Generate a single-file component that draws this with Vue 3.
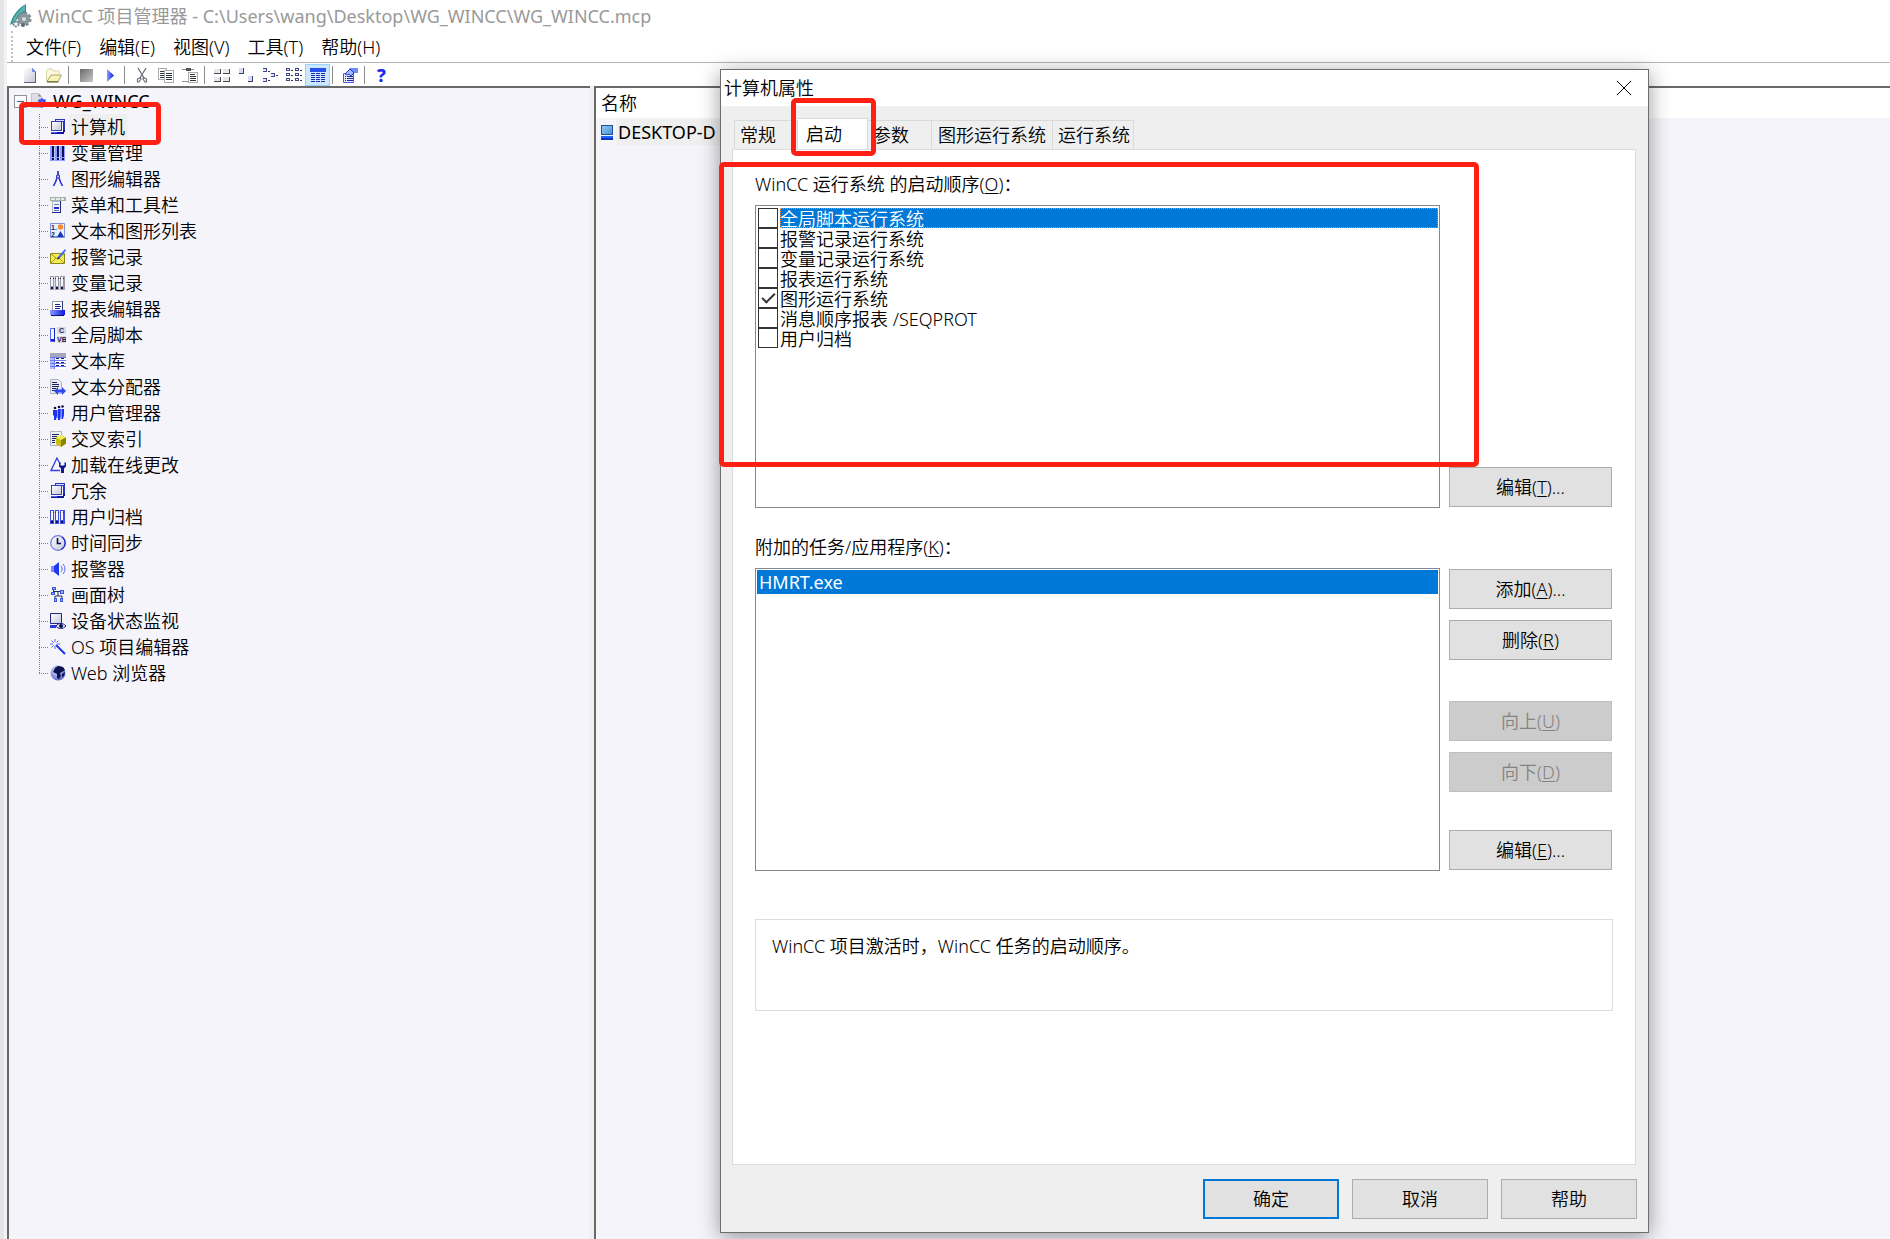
<template>
  <div class="desktop">
    <svg class="symbols" width="0" height="0" aria-hidden="true">
      <defs>
        <linearGradient id="blueFade" x1="0" x2="1" y1="0" y2="0">
          <stop offset="0" stop-color="#8aa0ff" />
          <stop offset="1" stop-color="#0a14e0" />
        </linearGradient>
        <linearGradient id="greyFade" x1="0" x2="1" y1="0" y2="1">
          <stop offset="0" stop-color="#6a6a6a" />
          <stop offset="1" stop-color="#c8c8c8" />
        </linearGradient>
        <linearGradient id="paperFade" x1="0" x2="1" y1="0" y2="1">
          <stop offset="0" stop-color="#ffffff" />
          <stop offset="1" stop-color="#c4c8d8" />
        </linearGradient>
        <linearGradient id="screenFade" x1="0" x2="1" y1="0" y2="1">
          <stop offset="0" stop-color="#8cc8f0" />
          <stop offset="1" stop-color="#4c94d4" />
        </linearGradient>
        <radialGradient id="globeFade" cx="0.4" cy="0.35" r="0.7">
          <stop offset="0" stop-color="#dfe2ff" />
          <stop offset="1" stop-color="#5660c8" />
        </radialGradient>
      </defs>

      <symbol id="wincc" viewBox="0 0 22 24">
        <path d="M16 0C8 4 2 12 0 21l6-3c1-5 4-8 10-9z" fill="#2f8f92" />
        <path d="M15 1C8 7 4 13 2 19l4-3c1-5 4-8 9-9z" fill="#5cb4b4" />
        <circle cx="14" cy="15" r="6" fill="#8c989e" />
        <circle cx="14" cy="15" r="6.500" fill="none" stroke="#7c888e" stroke-width="2" stroke-dasharray="3 2" />
        <circle cx="14" cy="15" r="2" fill="#d8dee0" />
        <circle cx="13" cy="21" r="2" fill="#5c6a72" />
        <circle cx="6" cy="20" r="2.500" fill="none" stroke="#7c888e" stroke-width="2" stroke-dasharray="2 1" />
      </symbol>

      <symbol id="computer" viewBox="0 0 16 16" shape-rendering="crispEdges">
        <path d="M5 0h10v11h-2V3H5z" fill="#2c34b8" />
        <path d="M6 1h8v1H6z" fill="#d8dcff" />
        <path d="M1 2h11v10H1z" fill="#3840b0" />
        <path d="M2 3h9v8H2z" fill="url(#paperFade)" />
        <path d="M13 11h2v2h-2z" fill="#10167c" />
        <path d="M1 13h13v2H1z" fill="#10169c" />
        <path d="M1 13h6v1H1z" fill="#5664ff" />
      </symbol>

      <symbol id="tags" viewBox="0 0 16 16" shape-rendering="crispEdges">
        <path d="M0 1h15v15H0z" fill="#8c9cff" />
        <path d="M2 1h2v11H2zM7 1h2v11H7zM12 1h2v11h-2z" fill="#08105c" />
        <path d="M2 13h2v2H2zM7 13h2v2H7zM12 13h2v2h-2z" fill="#08105c" />
        <path d="M4 1h1v15H4zM9 1h1v15H9z" fill="#c4ccff" />
      </symbol>

      <symbol id="compass" viewBox="0 0 16 16">
        <path d="M8 0v4" stroke="#101880" stroke-width="1.500" />
        <circle cx="8" cy="5.500" r="1.500" fill="none" stroke="#1c28c8" stroke-width="1.200" />
        <path d="M7 7L5.500 11 3.500 15M9 7l1.500 4 2 4" fill="none" stroke="#2430d8" stroke-width="1.600" />
      </symbol>

      <symbol id="menus" viewBox="0 0 16 16" shape-rendering="crispEdges">
        <path d="M0 0h16v4H0z" fill="#a4b0ac" />
        <path d="M1 1h4v2H1zM6 1h4v2H6zM11 1h3v2h-3z" fill="#e4ecec" />
        <path d="M2 4h9v12H2z" fill="#b0b4c8" />
        <path d="M10 4h1v12H2v-1h8z" fill="#20287c" />
        <path d="M3 5h7v10H3z" fill="#f4f6ff" />
        <path d="M4 7h5v1H4zM4 13h5v1H4z" fill="#6878a0" />
        <path d="M4 10h5v2H4z" fill="#1c28d0" />
      </symbol>

      <symbol id="alarm" viewBox="0 0 16 16">
        <path d="M.5 4.500h14v10H.500z" fill="#f4ec50" stroke="#8c8818" />
        <path d="M1 5l6.500 5L14 5M1 14l5-5M14 14l-5-5" fill="none" stroke="#a09c20" />
        <path d="M15 0l1 1.500-7 8.500H7.500l.3-2z" fill="#4868f8" />
        <path d="M7.800 8L7.300 10.500 9.500 9.600z" fill="#101860" />
      </symbol>

      <symbol id="archive" viewBox="0 0 16 16" shape-rendering="crispEdges">
        <path d="M0 1h4v14H0zM5 1h4v14H5zM10 1h5v14h-5z" fill="currentColor" />
        <path d="M1 2h2v9H1zM6 2h2v9H6zM11 2h2v9h-2z" fill="#f4f4ff" />
        <path d="M0 3h1v1H0zM3 3h1v1H3zM5 3h1v1H5zM8 3h1v1H8zM10 3h1v1h-1zM13 3h1v1h-1z" fill="#303040" />
        <path d="M1 12h2v2H1zM6 12h2v2H6zM11 12h2v2h-2z" fill="#101050" />
        <path d="M4 1h1v14H4zM9 1h1v14H9z" fill="#e0e0f0" />
      </symbol>

      <symbol id="report" viewBox="0 0 16 16" shape-rendering="crispEdges">
        <path d="M2 0h11v11H2z" fill="#9098b0" />
        <path d="M12 0h1v11h-1z" fill="#30387c" />
        <path d="M3 1h9v9H3z" fill="#fff" />
        <path d="M5 3h5v1H5zM5 5h6v1H5zM5 7h5v1H5z" fill="#182080" />
        <path d="M0 9h15v5H0z" fill="url(#blueFade)" />
        <path d="M1 14h13v1H1z" fill="#08107c" />
      </symbol>

      <symbol id="textlib" viewBox="0 0 16 16" shape-rendering="crispEdges">
        <path d="M0 0h16v16H0z" fill="#6878f0" />
        <path d="M0 0h16v4H0z" fill="#a4a8b8" />
        <path d="M5 5h11v2H5zM5 8h11v2H5zM5 11h11v2H5zM5 14h11v2H5z" fill="#fff" />
        <path d="M0 5h4v2H0zM0 8h4v2H0zM0 11h4v2H0zM0 14h4v2H0z" fill="#b4bcff" />
        <path d="M6 5h3v1H6zM11 5h3v1h-3zM6 9h3v1H6zM11 9h3v1h-3zM6 12h3v1H6zM11 12h3v1h-3z" fill="#182060" />
      </symbol>

      <symbol id="distribute" viewBox="0 0 16 16">
        <path d="M.5.5h8l3 3v11H.500z" fill="#e8eaf0" stroke="#b0b4c0" />
        <path d="M2 3.500h5M2 5.500h7M2 7.500h7M2 9.500h4M2 11.500h3" stroke="#182060" />
        <path d="M4 12l4-4v2.500h4V8l4 4-4 4v-2.500H8V16z" fill="#3048f0" />
      </symbol>

      <symbol id="users" viewBox="0 0 16 16">
        <circle cx="5" cy="3" r="1.300" fill="#101040" />
        <circle cx="9" cy="2" r="1.300" fill="#101040" />
        <circle cx="12.500" cy="1.500" r="1.300" fill="#101040" />
        <path d="M3 5h4v6l-1 4H4V11l-1-1zM8 4h3v7l-1 4H8zM11.500 4H14v6l-1 4h-1.500z" fill="#1c34f0" />
        <path d="M7.500 5v8M11 5v8" stroke="#7c90ff" />
      </symbol>

      <symbol id="xref" viewBox="0 0 16 16">
        <path d="M.5.5h11v14H.500z" fill="#f0f0f4" stroke="#b0b4c0" />
        <path d="M2 3.500h7M2 5.500h5M2 7.500h4M2 9.500h3M2 11.500h3" stroke="#182060" />
        <path d="M11 4l5 2.500v6L11 16l-5-3V6.500z" fill="#c8c010" />
        <path d="M11 4l5 2.500L11 9 6 6.500z" fill="#f0ec60" />
        <path d="M11 9l5-2.500v6L11 16z" fill="#8c8400" />
      </symbol>

      <symbol id="online" viewBox="0 0 16 16">
        <path d="M10 7L7 1 1 13.500h9" fill="none" stroke="#3040d8" stroke-width="1.300" />
        <path d="M9 6v3.500l2 2V16h3v-4.500l2-2V6l-1.500-1v3.500h-4V5z" fill="#101890" />
      </symbol>

      <symbol id="clock" viewBox="0 0 16 16">
        <circle cx="8" cy="8" r="7.300" fill="url(#paperFade)" stroke="#6878e0" stroke-width="1.200" />
        <path d="M12 2a7.300 7.300 0 0 1-1 12.500" fill="none" stroke="#1828c0" stroke-width="1.200" />
        <path d="M7.500 3v5.500H11" fill="none" stroke="#080c50" stroke-width="1.600" />
      </symbol>

      <symbol id="horn" viewBox="0 0 16 16">
        <path d="M1 5h3v6H1z" fill="#7c8cff" />
        <path d="M4 5l5-4v14l-5-4z" fill="#2038f0" />
        <path d="M11 5c1.500 2 1.500 4 0 6M13 3c2.500 3 2.500 7 0 10" fill="none" stroke="#5068f0" />
      </symbol>

      <symbol id="picturetree" viewBox="0 0 16 16">
        <path d="M3.500 2v4M4 4.500h8M8 5v4M5 11V9h7v2" fill="none" stroke="#203060" />
        <path d="M2 0h4v3H2zM1 5h4v3H1zM10 3h4v4h-4zM4 11h3v4H4zM10 11h3v4h-3z" fill="#3c54d8" />
        <path d="M3 1h2v1H3zM11 4h2v2h-2zM5 12h1v2H5zM11 12h1v2h-1zM2 6h2v1H2z" fill="#a0b0ff" />
      </symbol>

      <symbol id="monitor" viewBox="0 0 16 16">
        <path d="M.5.5h11v10H.500z" fill="url(#paperFade)" stroke="#202880" />
        <path d="M0 12h6v3H0z" fill="#2438e0" />
        <path d="M6 13c2-3.500 7-3.500 10 0-3 3.500-8 3.500-10 0z" fill="#d8dcff" stroke="#202880" />
        <circle cx="11" cy="13" r="2" fill="#080c50" />
      </symbol>

      <symbol id="wizard" viewBox="0 0 16 16">
        <path d="M6 6l9 9" stroke="#1c34e8" stroke-width="2" />
        <path d="M5 0v3M5 7v3M0 5h3M1.500 1.500l2 2M8.500 1.500l-2 2M1.500 8.500l2-2M7 5h3" stroke="#4c64f0" />
      </symbol>

      <symbol id="globe" viewBox="0 0 16 16">
        <circle cx="8" cy="8" r="7.500" fill="url(#globeFade)" />
        <path d="M5 3l3-2 5 1 2 3-3 2-2 1 1 3-2 3-2-1V9L3 7z" fill="#0c1250" />
        <path d="M12 9l3-2-1 4-2 1z" fill="#0c1250" />
      </symbol>

      <symbol id="project" viewBox="0 0 16 16">
        <path d="M.5.5h7l3 3v11H.500z" fill="#dcdee4" stroke="#c0c4cc" />
        <path d="M7.500.5v3h3" fill="#8088a0" />
        <circle cx="11" cy="10" r="3" fill="none" stroke="#3850e8" stroke-width="2" />
        <path d="M11 5v10M6 10h10M7.500 6.500l7 7M14.500 6.500l-7 7" stroke="#3850e8" stroke-width="1.300" />
        <circle cx="11" cy="10" r="1.500" fill="#dcdee4" />
      </symbol>

      <symbol id="pc" viewBox="0 0 12 15" shape-rendering="crispEdges">
        <path d="M0 0h12v10H0z" fill="#1c50a0" />
        <path d="M1 1h10v8H1z" fill="url(#screenFade)" />
        <path d="M0 11h12v4H0z" fill="#0c38b8" />
        <path d="M0 11h12v2H0z" fill="#2060ff" />
      </symbol>

      <symbol id="new" viewBox="0 0 16 16" shape-rendering="crispEdges">
        <path d="M2 1h8l4 4v11H2z" fill="#5c6070" />
        <path d="M2 1h8l3 4v10H2z" fill="url(#paperFade)" />
        <path d="M10 1v4h4z" fill="#7c90e0" />
      </symbol>

      <symbol id="open" viewBox="0 0 16 16">
        <path d="M.5 14V3.500L2 2h4l1 2h6v3" fill="#fdfae0" stroke="#d8d4a8" />
        <path d="M1 14.500L5 8h10.500l-3.500 6.500z" fill="#f6f2b8" stroke="#a8a460" />
        <path d="M1 15h11.500" stroke="#505020" />
      </symbol>

      <symbol id="stop" viewBox="0 0 16 16" shape-rendering="crispEdges">
        <path d="M2 2h13v13H2z" fill="url(#greyFade)" />
      </symbol>

      <symbol id="play" viewBox="0 0 16 16">
        <path d="M5 2l7 6.500L5 15z" fill="url(#blueFade)" />
      </symbol>

      <symbol id="cut" viewBox="0 0 16 16">
        <path d="M4 1l6 10M12 1L6 11" stroke="#6c7078" stroke-width="1.300" />
        <path d="M6.500 10.500L3.500 12v3h1.500l2-3zM9.500 10.500l3 1.500v3H11l-2-3z" fill="none" stroke="#6c7078" stroke-width="1.200" />
      </symbol>

      <symbol id="copy" viewBox="0 0 16 16" shape-rendering="crispEdges">
        <path d="M.5 1.500h8v11h-8z" fill="#fff" stroke="#a8acb0" />
        <path d="M2 4h5v1H2zM2 6h5v1H2zM2 8h5v1H2zM2 10h5v1H2z" fill="#303438" />
        <path d="M6.500 3.500h9v12h-9z" fill="#fff" stroke="#a8acb0" />
        <path d="M8 6h6v1H8zM8 8h6v1H8zM8 10h6v1H8zM8 12h6v1H8z" fill="#303438" />
      </symbol>

      <symbol id="paste" viewBox="0 0 16 16" shape-rendering="crispEdges">
        <path d="M0 2h12v1H0z" fill="#8c9098" />
        <path d="M4 1h5v3H4z" fill="#505458" />
        <path d="M0 14h6v1H0z" fill="#8c9098" />
        <path d="M6.500 5.500h9v10h-9z" fill="#fff" stroke="#a8acb0" />
        <path d="M8 7h5v1H8zM8 9h6v1H8zM8 11h6v1H8zM8 13h6v1H8z" fill="#303438" />
      </symbol>

      <symbol id="large" viewBox="0 0 16 16" shape-rendering="crispEdges">
        <path d="M0 2h7v5H0zM9 2h7v5H9zM0 10h7v5H0zM9 10h7v5H9z" fill="#484c50" />
        <path d="M0 2h6v4H0zM9 2h6v4H9zM0 10h6v4H0zM9 10h6v4H9z" fill="#e4e8ec" />
      </symbol>

      <symbol id="small" viewBox="0 0 16 16" shape-rendering="crispEdges">
        <path d="M1 1h5v6H1zM10 9h5v6h-5z" fill="#383c70" />
        <path d="M1 1h4v5H1zM10 9h4v5h-4z" fill="#d8dcf0" />
      </symbol>

      <symbol id="list" viewBox="0 0 16 16" shape-rendering="crispEdges">
        <path d="M1 1h4v4H1zM1 11h4v4H1zM9 6h4v4H9z" fill="#40448c" />
        <path d="M1 2h3v2H1zM1 12h3v2H1zM9 7h3v2H9z" fill="#e4e8ff" />
        <path d="M6 4h2v1H6zM6 13h2v1H6zM14 8h2v1h-2z" fill="#303438" />
      </symbol>

      <symbol id="columns" viewBox="0 0 16 16" shape-rendering="crispEdges">
        <path d="M0 1h4v3H0zM9 1h4v3H9zM0 6h4v3H0zM9 6h4v3H9zM0 11h4v3H0zM9 11h4v3H9z" fill="#40448c" />
        <path d="M1 2h2v1H1zM10 2h2v1h-2zM1 7h2v1H1zM10 7h2v1h-2zM1 12h2v1H1zM10 12h2v1h-2z" fill="#fff" />
        <path d="M5 3h2v1H5zM14 3h2v1h-2zM5 8h2v1H5zM14 8h2v1h-2zM5 13h2v1H5zM14 13h2v1h-2z" fill="#303438" />
      </symbol>

      <symbol id="details" viewBox="0 0 16 16" shape-rendering="crispEdges">
        <path d="M0 1h16v4H0z" fill="#2850e8" />
        <path d="M1 6h4v1H1zM6 6h4v1H6zM11 6h4v1h-4zM1 8h4v1H1zM6 8h4v1H6zM11 8h4v1h-4zM1 10h4v1H1zM6 10h4v1H6zM11 10h4v1h-4zM1 12h4v1H1zM6 12h4v1H6zM11 12h4v1h-4zM1 14h4v1H1zM6 14h4v1H6zM11 14h4v1h-4z" fill="#1c2cb0" />
      </symbol>

      <symbol id="properties" viewBox="0 0 16 16">
        <path d="M7 1h9v5h-4z" fill="#6c8cf8" />
        <path d="M1.500 6.500h10v9h-10z" fill="#e8ecff" stroke="#4858d8" />
        <path d="M3 9.500h1M5 9.500h6M3 11.500h1M5 11.500h6M3 13.500h1M5 13.500h6" stroke="#1828a0" />
        <path d="M3 7l5-5 4 4-3 3-2-2-2 1z" fill="#a8b8ff" stroke="#2838c8" />
      </symbol>
    </svg>

    <div class="app-window">
      <header class="titlebar">
        <svg class="app-icon"><use href="#wincc" /></svg>
        <h1>WinCC 项目管理器 - C:\Users\wang\Desktop\WG_WINCC\WG_WINCC.mcp</h1>
      </header>

      <nav class="menubar">
        <button v-for="item in menus" :key="item" type="button">{{ item }}</button>
      </nav>

      <div class="toolbar">
        <div v-for="(group, i) in tools" :key="i" class="tool-group">
          <button
            v-for="tool in group"
            :key="tool.icon"
            type="button"
            :class="{ active: tool.icon === 'details' }"
            :aria-label="tool.label"
          >
            <b v-if="tool.icon === 'help'">?</b>
            <svg v-else class="icon"><use :href="'#' + tool.icon" /></svg>
          </button>
        </div>
      </div>

      <main class="panes">
        <div class="tree-pane">
          <div class="tree-root">
            <button type="button" class="expander" aria-label="WG_WINCC"></button>
            <svg class="icon"><use href="#project" /></svg>
            <span>WG_WINCC</span>
          </div>
          <ul class="tree">
            <li v-for="node in nodes" :key="node.text" :class="{ current: node.text === '计算机' }">
              <svg v-if="node.icon === 'lists'" class="icon" viewBox="0 0 16 16">
                <path d="M.5.5h14v14H.500z" fill="#eef0ff" stroke="#8090d8" />
                <text x="1" y="7" class="glyph">1.</text>
                <text x="1" y="14" class="glyph">2.</text>
                <circle cx="10.500" cy="4" r="2.700" fill="#f09030" />
                <path d="M10.500 8L7 14h7z" fill="#1c38b0" />
              </svg>
              <svg v-else-if="node.icon === 'script'" class="icon" viewBox="0 0 16 16">
                <path d="M.5 1.500h4v13h-4z" fill="#f4f4ff" stroke="#5868f0" />
                <path d="M4.500 1v14" stroke="#1420c0" />
                <path d="M1 12h3v2H1z" fill="#1420c0" />
                <path d="M7 0h9v7H7zM7 9h9v7H7z" fill="#d8dae0" />
                <text x="9" y="6" class="glyph">C</text>
                <text x="7" y="15" class="glyph">VB</text>
              </svg>
              <svg v-else class="icon" :class="{ grey: node.text === '变量记录' }"><use :href="'#' + node.icon" /></svg>
              <span>{{ node.text }}</span>
            </li>
          </ul>
        </div>

        <div class="list-pane">
          <table>
            <thead>
              <tr><th>名称</th></tr>
            </thead>
            <tbody>
              <tr>
                <td>
                  <div class="machine">
                    <svg><use href="#pc" /></svg>
                    <span>DESKTOP-D</span>
                  </div>
                </td>
              </tr>
            </tbody>
          </table>
        </div>
      </main>
    </div>

    <section class="dialog" role="dialog" aria-labelledby="dialog-title">
      <header class="dialog-title">
        <h2 id="dialog-title">计算机属性</h2>
        <button type="button" aria-label="关闭">
          <svg viewBox="0 0 16 16"><path d="M1 1l14 14M15 1L1 15" /></svg>
        </button>
      </header>

      <div class="tabs" role="tablist">
        <button
          v-for="tab in tabs"
          :key="tab"
          type="button"
          role="tab"
          :class="{ selected: tab === activeTab, wide: tab === '参数' }"
          :aria-selected="tab === activeTab"
          @click="activeTab = tab"
        >{{ tab }}</button>
        <span class="callout tab-callout"></span>
      </div>

      <div class="sheet">
        <div class="field">
          <h3>WinCC 运行系统 的启动顺序(<u>O</u>)：</h3>
          <div class="field-row">
            <ul class="listbox">
              <li v-for="(item, i) in startup" :key="item.text" :class="{ selected: i === 0 }">
                <input :id="'startup-' + i" v-model="item.checked" type="checkbox" />
                <label :for="'startup-' + i">{{ item.text }}</label>
              </li>
            </ul>
            <div class="side bottom">
              <button type="button" class="btn">编辑(<u>T</u>)...</button>
            </div>
          </div>
        </div>

        <div class="field">
          <h3 id="tasks-label">附加的任务/应用程序(<u>K</u>)：</h3>
          <div class="field-row">
            <ul class="listbox tasks" role="listbox" aria-labelledby="tasks-label">
              <li class="selected" role="option" aria-selected="true">HMRT.exe</li>
            </ul>
            <div class="side">
              <div class="btn-pair">
                <button type="button" class="btn">添加(<u>A</u>)...</button>
                <button type="button" class="btn">删除(<u>R</u>)</button>
              </div>
              <div class="btn-pair">
                <button type="button" class="btn" disabled>向上(<u>U</u>)</button>
                <button type="button" class="btn" disabled>向下(<u>D</u>)</button>
              </div>
              <button type="button" class="btn">编辑(<u>E</u>)...</button>
            </div>
          </div>
        </div>

        <p class="hint">WinCC 项目激活时，WinCC 任务的启动顺序。</p>
      </div>

      <footer class="dialog-footer">
        <button type="button" class="btn primary">确定</button>
        <button type="button" class="btn">取消</button>
        <button type="button" class="btn">帮助</button>
      </footer>
      <span class="callout list-callout"></span>
    </section>

    <span class="callout node-callout"></span>
  </div>
</template>

<script setup>
import { ref } from 'vue';

const menus = ['文件(F)', '编辑(E)', '视图(V)', '工具(T)', '帮助(H)'];

const tools = [
  [
    { icon: 'new', label: '新建' },
    { icon: 'open', label: '打开' }
  ],
  [
    { icon: 'stop', label: '取消激活' },
    { icon: 'play', label: '激活' }
  ],
  [
    { icon: 'cut', label: '剪切' },
    { icon: 'copy', label: '复制' },
    { icon: 'paste', label: '粘贴' }
  ],
  [
    { icon: 'large', label: '大图标' },
    { icon: 'small', label: '小图标' },
    { icon: 'list', label: '列表' },
    { icon: 'columns', label: '平铺' },
    { icon: 'details', label: '详细信息' }
  ],
  [{ icon: 'properties', label: '属性' }],
  [{ icon: 'help', label: '帮助' }]
];

const nodes = [
  { icon: 'computer', text: '计算机' },
  { icon: 'tags', text: '变量管理' },
  { icon: 'compass', text: '图形编辑器' },
  { icon: 'menus', text: '菜单和工具栏' },
  { icon: 'lists', text: '文本和图形列表' },
  { icon: 'alarm', text: '报警记录' },
  { icon: 'archive', text: '变量记录' },
  { icon: 'report', text: '报表编辑器' },
  { icon: 'script', text: '全局脚本' },
  { icon: 'textlib', text: '文本库' },
  { icon: 'distribute', text: '文本分配器' },
  { icon: 'users', text: '用户管理器' },
  { icon: 'xref', text: '交叉索引' },
  { icon: 'online', text: '加载在线更改' },
  { icon: 'computer', text: '冗余' },
  { icon: 'archive', text: '用户归档' },
  { icon: 'clock', text: '时间同步' },
  { icon: 'horn', text: '报警器' },
  { icon: 'picturetree', text: '画面树' },
  { icon: 'monitor', text: '设备状态监视' },
  { icon: 'wizard', text: 'OS 项目编辑器' },
  { icon: 'globe', text: 'Web 浏览器' }
];

const tabs = ['常规', '启动', '参数', '图形运行系统', '运行系统'];
const activeTab = ref('启动');

const startup = ref([
  { text: '全局脚本运行系统', checked: false },
  { text: '报警记录运行系统', checked: false },
  { text: '变量记录运行系统', checked: false },
  { text: '报表运行系统', checked: false },
  { text: '图形运行系统', checked: true },
  { text: '消息顺序报表 /SEQPROT', checked: false },
  { text: '用户归档', checked: false }
]);
</script>

<style>
body {
  margin: 0;
  background: #e4e5e6;
}
</style>

<style scoped>
.desktop {
  position: relative;
  display: flex;
  min-height: 100vh;
  overflow: hidden;
  padding-left: 4px;
  box-sizing: border-box;
  background: #e4e5e6;
  color: #000;
  font-family: "Noto Sans", "Noto Sans CJK SC", sans-serif;
  font-size: 18px;
  font-weight: 350;
  line-height: 26px;
}

.symbols {
  position: absolute;
}

.glyph {
  font-family: "Liberation Sans", sans-serif;
  font-size: 7px;
  font-weight: bold;
  fill: #182060;
}

h1,
h2,
h3,
p,
ul {
  margin: 0;
  padding: 0;
  font-size: 18px;
  font-weight: 350;
}

ul {
  list-style: none;
}

button {
  font: inherit;
  color: inherit;
  padding: 0;
  border: 0;
  background: none;
}

u {
  text-decoration-thickness: 1px;
  text-underline-offset: 2px;
}

.icon {
  width: 16px;
  height: 16px;
  flex: none;
}

/* main window */
.app-window {
  flex: 1;
  display: flex;
  flex-direction: column;
  border-left: 3px solid #f2f3f4;
  background: #fff;
}

.titlebar {
  display: flex;
  align-items: center;
  gap: 6px;
  height: 31px;
  padding-left: 3px;
  color: #999;
}

.titlebar h1 {
  font-weight: 400;
}

.app-icon {
  width: 22px;
  height: 24px;
}

.menubar {
  display: flex;
  gap: 18px;
  height: 31px;
  margin-left: 4px;
  padding-left: 13px;
  border-left: 2px dotted #c0c0c0;
}

.toolbar {
  display: flex;
  align-items: center;
  height: 23px;
  border-top: 1px solid #b4b4b4;
  padding-left: 6px;
}

.tool-group {
  display: flex;
  align-items: center;
  height: 18px;
  padding: 0 3px 0 5px;
  gap: 1px;
  border-right: 1px solid #8c8c8c;
}

.tool-group:last-child {
  border-right: 0;
}

.tool-group button {
  display: flex;
  align-items: center;
  justify-content: center;
  width: 23px;
  height: 20px;
}

.tool-group b {
  color: #1c28f0;
  font-size: 18px;
  font-weight: 800;
}

.tool-group .active {
  background: #cce8ff;
  outline: 1px solid #99d1ff;
}

.panes {
  flex: 1;
  display: flex;
  gap: 4px;
  background: #efefef;
}

.tree-pane,
.list-pane {
  border-top: 2px solid #696969;
  border-left: 2px solid #696969;
  background: #f5f4fa;
}

.tree-pane {
  width: 581px;
  flex: none;
}

.list-pane {
  flex: 1;
}

.tree-root {
  display: flex;
  align-items: center;
  height: 26px;
  padding-left: 5px;
}

.expander {
  width: 13px;
  height: 13px;
  margin-right: 4px;
  border: 1px solid #919191;
  background: linear-gradient(#4b63a7, #4b63a7) center / 7px 1px no-repeat #fcfcfc;
}

.tree-root span {
  padding-left: 6px;
  font-weight: 400;
}

.tree {
  padding-left: 30px;
}

.tree li {
  display: flex;
  align-items: center;
  height: 26px;
  background:
    repeating-linear-gradient(#808080 0 1px, transparent 1px 2px) left top / 1px 100% no-repeat,
    repeating-linear-gradient(90deg, #808080 0 1px, transparent 1px 2px) left center / 10px 1px no-repeat;
  padding-left: 11px;
  color: #4050e0;
}

.tree li:last-child {
  background-size: 1px 50%, 10px 1px;
}

.tree span {
  margin-left: 3px;
  padding: 0 2px;
  color: #000;
}

.tree .current span {
  background: #efefef;
}

.tree .grey {
  color: #9c9ca4;
}

table {
  width: 100%;
  border-spacing: 0;
}

th {
  height: 30px;
  padding: 0 5px;
  background: #fff;
  font-weight: 350;
  text-align: left;
}

td {
  padding: 0 0 0 5px;
}

.machine {
  display: flex;
  align-items: center;
  gap: 3px;
  height: 28px;
}

.machine svg {
  width: 12px;
  height: 15px;
}

.machine span {
  padding: 0 8px 0 2px;
  background: #efefef;
  font-weight: 400;
}

/* properties dialog */
.dialog {
  position: absolute;
  top: 69px;
  left: 720px;
  width: 929px;
  box-sizing: border-box;
  border: 1px solid #6e6e6e;
  background: #efefef;
  box-shadow: 0 4px 20px rgba(0, 0, 0, 0.4);
}

.dialog-title {
  display: flex;
  align-items: center;
  justify-content: space-between;
  height: 36px;
  padding: 0 16px 0 3px;
  background: #fff;
}

.dialog-title button {
  display: flex;
}

.dialog-title svg {
  width: 16px;
  height: 16px;
  fill: none;
  stroke: #000;
}

.tabs {
  position: relative;
  display: flex;
  align-items: flex-end;
  height: 43px;
  padding-left: 13px;
}

.tabs button {
  height: 29px;
  padding: 0 6px;
  border: 1px solid #d9d9d9;
  border-bottom: 0;
  border-left: 0;
}

.tabs button:first-child {
  padding: 0 21px 0 5px;
  border-left: 1px solid #d9d9d9;
}

.tabs button:nth-last-child(2) {
  padding: 0 3px 0 5px;
}

.tabs .selected {
  height: 31px;
  padding: 0 25px 0 8px;
  background: #fff;
}

.tabs .wide {
  padding: 0 22px 0 5px;
}

.sheet {
  min-height: 1016px;
  margin: 0 12px 0 11px;
  padding: 21px 22px 0;
  box-sizing: border-box;
  border: 1px solid #dcdcdc;
  background: #fff;
}

.field {
  margin: 0 1px 26px 0;
}

.field h3 {
  margin-bottom: 8px;
}

.field-row {
  display: flex;
  gap: 9px;
}

.listbox {
  flex: 1;
  height: 303px;
  box-sizing: border-box;
  padding: 2px 1px 2px 2px;
  border: 1px solid #828790;
}

.listbox li {
  display: flex;
  height: 20px;
  line-height: 20px;
}

.listbox input {
  appearance: none;
  position: relative;
  width: 20px;
  height: 20px;
  flex: none;
  margin: 0 2px 0 0;
  border: 1px solid #333;
  background: #fff;
}

.listbox input:checked::before {
  content: "";
  position: absolute;
  top: 4px;
  left: 3px;
  width: 11px;
  height: 5px;
  border: solid #333;
  border-width: 0 0 2px 2px;
  transform: rotate(-45deg);
}

.listbox label {
  flex: 1;
  height: 20px;
  box-sizing: border-box;
  padding-top: 1px;
}

.listbox .selected label {
  background: #0078d7;
  color: #fff;
  outline: 1px dotted #ff8728;
  outline-offset: -1px;
}

.tasks {
  padding: 1px;
}

.tasks .selected {
  height: 24px;
  padding-left: 2px;
  background: #0078d7;
  color: #fff;
  font-weight: 400;
  line-height: 24px;
}

.side {
  display: flex;
  flex-direction: column;
  justify-content: space-between;
  width: 163px;
  padding: 1px 0;
}

.side.bottom {
  justify-content: flex-end;
}

.btn-pair {
  display: grid;
  gap: 11px;
}

.btn-pair + .btn-pair {
  margin-top: 3px;
}

.btn {
  height: 40px;
  border: 1px solid #adadad;
  background: #e1e1e1;
}

.btn:disabled {
  border-color: #bfbfbf;
  background: #ccc;
  color: #838383;
}

.hint {
  height: 92px;
  box-sizing: border-box;
  margin-top: 48px;
  padding: 13px 16px;
  border: 1px solid #dcdcdc;
}

.dialog-footer {
  display: flex;
  justify-content: flex-end;
  gap: 13px;
  padding: 14px 11px 13px;
}

.dialog-footer .btn {
  width: 136px;
}

.dialog-footer .primary {
  border: 2px solid #0078d7;
}

/* red marker frames */
.callout {
  position: absolute;
  box-sizing: border-box;
  border: 5px solid #ff2013;
  border-radius: 5px;
  pointer-events: none;
}

.node-callout {
  top: 102px;
  left: 19px;
  width: 142px;
  height: 43px;
}

.tab-callout {
  top: -8px;
  left: 70px;
  width: 85px;
  height: 58px;
}

.list-callout {
  top: 92px;
  left: -2px;
  width: 760px;
  height: 305px;
}
</style>
